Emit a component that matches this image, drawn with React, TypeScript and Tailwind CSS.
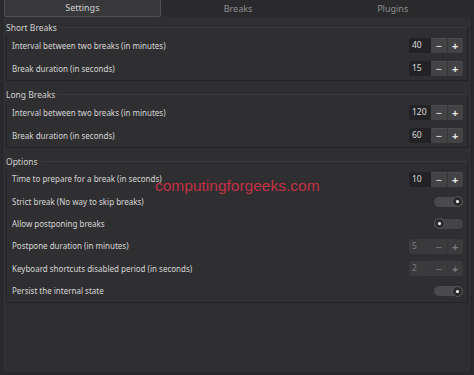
import React from 'react';

type Row =
  | { label: string; kind: 'spin'; value: string; disabled?: boolean }
  | { label: string; kind: 'switch'; on: boolean };

const shortBreaks: Row[] = [
  { label: 'Interval between two breaks (in minutes)', kind: 'spin', value: '40' },
  { label: 'Break duration (in seconds)', kind: 'spin', value: '15' },
];

const longBreaks: Row[] = [
  { label: 'Interval between two breaks (in minutes)', kind: 'spin', value: '120' },
  { label: 'Break duration (in seconds)', kind: 'spin', value: '60' },
];

const options: Row[] = [
  { label: 'Time to prepare for a break (in seconds)', kind: 'spin', value: '10' },
  { label: 'Strict break (No way to skip breaks)', kind: 'switch', on: true },
  { label: 'Allow postponing breaks', kind: 'switch', on: false },
  { label: 'Postpone duration (in minutes)', kind: 'spin', value: '5', disabled: true },
  { label: 'Keyboard shortcuts disabled period (in seconds)', kind: 'spin', value: '2', disabled: true },
  { label: 'Persist the internal state', kind: 'switch', on: true },
];

function SpinButton({ value, disabled }: { value: string; disabled?: boolean }) {
  return (
    <div className="flex h-[15px] text-[8.5px]">
      <div
        className={
          disabled
            ? 'w-[22px] flex items-center pl-[3px] rounded-l-[2px] bg-[#3a3a3c] text-[#7c7c7e]'
            : 'w-[22px] flex items-center pl-[3px] rounded-l-[2px] bg-[#232325] text-[#dcdcdc]'
        }
      >
        {value}
      </div>
      <div
        className={
          disabled
            ? 'flex w-[32px] rounded-r-[2px] bg-[#3b3b3d] text-[#7c7c7e]'
            : 'flex w-[32px] rounded-r-[2px] bg-[#434345] text-[#e8e8e8] shadow-[inset_0_1px_0_#4c4c4e]'
        }
      >
        <span className="flex-1 flex items-center justify-center text-[11px] leading-none border-r border-[#363638]">−</span>
        <span className="flex-1 flex items-center justify-center text-[11px] leading-none font-bold">+</span>
      </div>
    </div>
  );
}

function Switch({ on }: { on: boolean }) {
  return (
    <div className={on ? 'flex w-[29px] h-[10px] rounded-full bg-[#4a4a4c] items-center justify-end' : 'flex w-[29px] h-[10px] rounded-full bg-[#444446] items-center justify-start'}>
      <div className="w-[11px] h-[11px] rounded-full bg-[#2c2c2e] border border-[#5a5a5c] flex items-center justify-center">
        <div className="w-[3px] h-[3px] rounded-full bg-white" />
      </div>
    </div>
  );
}

function Section({ title, rows, rowClass }: { title: string; rows: Row[]; rowClass: string }) {
  return (
    <div className="border border-[#232325] border-t-[#3a3a3c] pt-[6px] pr-[4px]">
      <div className="-mt-[13px] -mb-px -ml-px w-fit pr-[3px] bg-[#2f2f31] text-[8.5px] text-[#d2d2d2] leading-[14px]">
        {title}
      </div>
      {rows.map((r, i) => (
        <div key={i} className={rowClass + ' flex items-center justify-between pl-[5px]'}>
          <span>{r.label}</span>
          {r.kind === 'spin' ? <SpinButton value={r.value} disabled={r.disabled} /> : <Switch on={r.on} />}
        </div>
      ))}
    </div>
  );
}

export default function App() {
  return (
    <div
      className="relative w-[474px] h-[375px] bg-[#2a2a2c] text-[8px] text-[#d6d6d6] overflow-hidden"
      style={{ fontFamily: '"Noto Sans", "Open Sans", sans-serif' }}
    >
      <div className="flex h-[17px] px-[4px] text-[9px]">
        <div className="flex-1 flex items-center justify-center bg-[#38383a] border border-[#505052] border-t-0 rounded-b-[2px] text-[#cfcfcf]">
          Settings
        </div>
        <div className="flex-1 flex items-center justify-center text-[#8e8e90]">Breaks</div>
        <div className="flex-1 flex items-center justify-center text-[#8e8e90]">Plugins</div>
      </div>
      <div className="mx-[2px] h-[356px] rounded-b-[4px] bg-[#2f2f31] border border-[#262628] border-t-0 pt-[10px] px-[3px] flex flex-col gap-[13px]">
        <Section title="Short Breaks" rows={shortBreaks} rowClass="h-[23px]" />
        <Section title="Long Breaks" rows={longBreaks} rowClass="h-[23px]" />
        <Section title="Options" rows={options} rowClass="h-[22.4px]" />
      </div>
      <div
        className="absolute left-[155px] top-[176px] text-[15.5px] leading-[20px] text-[#d4314a] opacity-90"
        style={{ fontFamily: '"Liberation Sans", Arial, sans-serif' }}
      >
        computingforgeeks.com
      </div>
    </div>
  );
}
